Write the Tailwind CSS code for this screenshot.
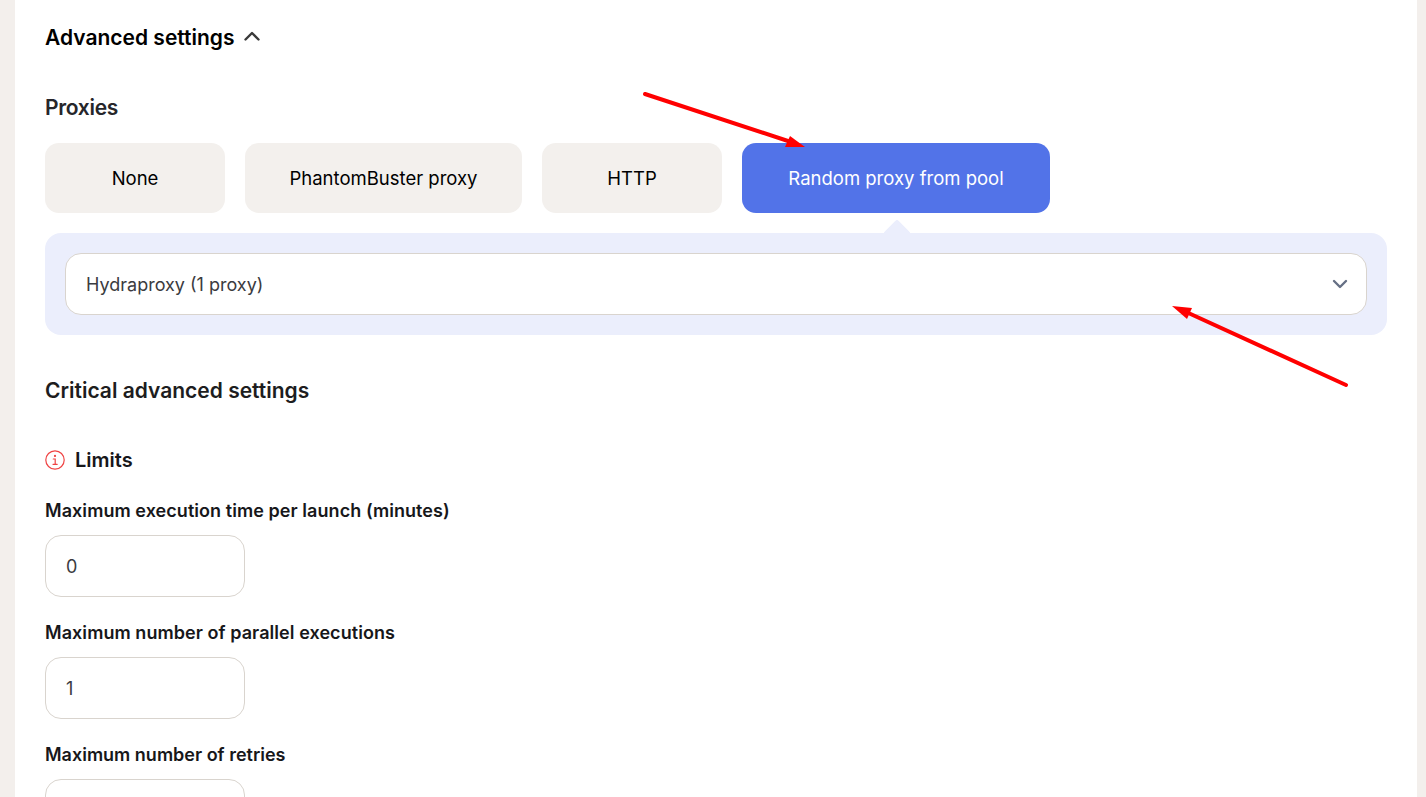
<!DOCTYPE html>
<html lang="en">
  <head>
    <meta charset="UTF-8" />
    <meta name="viewport" content="width=device-width, initial-scale=1.0" />
    <title>Advanced settings</title>
    <script src="https://cdn.jsdelivr.net/npm/@tailwindcss/browser@4"></script>
  </head>
  <body class="bg-[#f3efec] h-[797px] overflow-hidden font-['Inter',sans-serif] text-[#17171a]">
    <main class="relative ml-[15px] w-[1402px] h-[797px] bg-white px-[30px] overflow-hidden">
      <!-- Header -->
      <div class="h-[74px] pt-[23px] flex items-start gap-[10px]">
        <h1 class="text-[21px] leading-[30px] font-semibold text-black">Advanced settings</h1>
        <svg class="w-4 h-4 mt-[6px]" viewBox="0 0 16 16" fill="none" stroke="#3a3a3a" stroke-width="2.4" stroke-linecap="round" stroke-linejoin="round"><path d="M1.5 10.5 8 4 14.5 10.5"/></svg>
      </div>

      <!-- Proxies -->
      <h2 class="h-[69px] pt-[19px] text-[21px] leading-[30px] font-semibold tracking-[-0.3px] text-[#26262a]">Proxies</h2>
      <div class="flex gap-5 text-[18.5px]">
        <button class="w-[180px] h-[70px] pt-px rounded-[14px] bg-[#f3f0ed] text-black">None</button>
        <button class="w-[277px] h-[70px] pt-px rounded-[14px] bg-[#f3f0ed] text-black">PhantomBuster proxy</button>
        <button class="w-[180px] h-[70px] pt-px rounded-[14px] bg-[#f3f0ed] text-black">HTTP</button>
        <button class="w-[308px] h-[70px] pt-px rounded-[14px] bg-[#5273e8] text-white">Random proxy from pool</button>
      </div>
      <div class="relative mt-5 w-[1342px] h-[102px] p-5 rounded-2xl bg-[#ebeefc]">
        <div class="absolute left-[842px] -top-[10px] w-5 h-5 rotate-45 rounded-[3px] bg-[#ebeefc] [clip-path:polygon(0_0,100%_0,0_100%)]"></div>
        <div class="flex items-center justify-between h-[62px] pl-5 pr-[18px] bg-white border border-[#d9d4ce] rounded-2xl text-[18px] text-[#3b3b40]">
          <span>Hydraproxy (1 proxy)</span>
          <svg class="w-4 h-4" viewBox="0 0 16 16" fill="none" stroke="#667085" stroke-width="2.4" stroke-linecap="round" stroke-linejoin="round"><path d="M2 5 8 11 14 5"/></svg>
        </div>
      </div>

      <!-- Critical settings -->
      <h2 class="h-[110px] pt-[41px] text-[21px] leading-[30px] font-semibold text-[#1d1d20]">Critical advanced settings</h2>
      <div class="flex items-center gap-[10px] h-[30px]">
        <svg class="w-5 h-5" viewBox="0 0 20 20" fill="none" stroke="#ef4444" stroke-width="1.2" stroke-linecap="round"><circle cx="10" cy="10" r="9.2"/><path d="M8.3 9h1.9v5.2M8 14.3h4.2"/><circle cx="10" cy="5.9" r=".5" fill="#ef4444"/></svg>
        <h3 class="text-[20px] leading-[30px] font-semibold">Limits</h3>
      </div>

      <div class="mt-[25px] flex flex-col gap-[25px]">
        <div>
          <label class="block h-[35px] pt-px text-[18px] leading-[20px] font-semibold tracking-[0.06px]">Maximum execution time per launch (minutes)</label>
          <div class="flex items-center w-[200px] h-[62px] pl-5 border border-[#d9d4ce] rounded-2xl text-[18px] text-[#3b3b40]">0</div>
        </div>
        <div>
          <label class="block h-[35px] pt-px text-[18px] leading-[20px] font-semibold tracking-[0.06px]">Maximum number of parallel executions</label>
          <div class="flex items-center w-[200px] h-[62px] pl-5 border border-[#d9d4ce] rounded-2xl text-[18px] text-[#3b3b40]">1</div>
        </div>
        <div>
          <label class="block h-[35px] pt-px text-[18px] leading-[20px] font-semibold">Maximum number of retries</label>
          <div class="flex items-center w-[200px] h-[62px] pl-5 border border-[#d9d4ce] rounded-2xl text-[18px] text-[#3b3b40]"></div>
        </div>
      </div>

      <!-- Annotation arrows -->
      <svg class="absolute left-[-15px] top-0 w-[1426px] h-[797px] pointer-events-none" viewBox="0 0 1426 797" fill="none">
        <path d="M645 94 794 143" stroke="#ff0000" stroke-width="4" stroke-linecap="round"/>
        <path d="M805 147 785 147 790 136Z" fill="#ff0000"/>
        <path d="M1346 385 1184 311" stroke="#ff0000" stroke-width="4" stroke-linecap="round"/>
        <path d="M1172 306 1192 308 1187 319Z" fill="#ff0000"/>
      </svg>
    </main>
  </body>
</html>
